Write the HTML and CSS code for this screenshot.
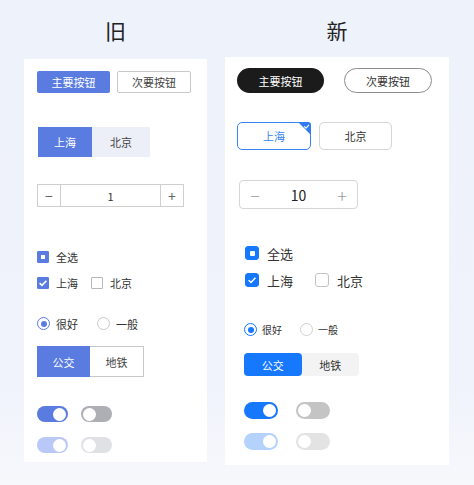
FILE: index.html
```html
<!DOCTYPE html>
<html lang="zh-CN">
<head>
    <meta charset="UTF-8">
    <meta name="viewport" content="width=device-width, initial-scale=1.0">
    <title>组件对比</title>
    <link rel="stylesheet" href="styles.css">
</head>
<body>
    <div class="page">
        <!-- 旧版组件 -->
        <div class="column old">
            <h2 class="title">旧</h2>
            <div class="card">
                <div class="btn-row">
                    <span class="btn primary">主要按钮</span>
                    <span class="btn secondary">次要按钮</span>
                </div>

                <div class="tabs">
                    <span class="tab active">上海</span>
                    <span class="tab">北京</span>
                </div>

                <div class="stepper">
                    <span class="step">&minus;</span>
                    <span class="value">1</span>
                    <span class="step">+</span>
                </div>

                <div class="check-row first">
                    <label class="check"><span class="box half"></span>全选</label>
                </div>
                <div class="check-row">
                    <label class="check"><span class="box on">
                        <svg viewBox="0 0 12 12" width="12" height="12"><path d="M2.6 6.2 L5 8.4 L9.4 3.8" fill="none" stroke="#fff" stroke-width="1.6"/></svg>
                    </span>上海</label>
                    <label class="check"><span class="box"></span>北京</label>
                </div>

                <div class="radio-row">
                    <label class="radio"><span class="dot on"></span>很好</label>
                    <label class="radio"><span class="dot"></span>一般</label>
                </div>

                <div class="segment">
                    <span class="seg active">公交</span>
                    <span class="seg">地铁</span>
                </div>

                <div class="switch-row first">
                    <span class="switch on"></span>
                    <span class="switch"></span>
                </div>
                <div class="switch-row">
                    <span class="switch on disabled"></span>
                    <span class="switch disabled"></span>
                </div>
            </div>
        </div>

        <!-- 新版组件 -->
        <div class="column new">
            <h2 class="title">新</h2>
            <div class="card">
                <div class="btn-row">
                    <span class="btn primary">主要按钮</span>
                    <span class="btn secondary">次要按钮</span>
                </div>

                <div class="tabs">
                    <span class="tab active">上海
                        <svg class="corner" viewBox="0 0 14 14" width="14" height="14">
                            <path d="M1 0 H11 A3 3 0 0 1 14 3 V13 Z" fill="#2f7bf5"/>
                            <path d="M7.2 4.4 L9 6.1 L12 2.8" fill="none" stroke="#fff" stroke-width="1.1"/>
                        </svg>
                    </span>
                    <span class="tab">北京</span>
                </div>

                <div class="stepper">
                    <span class="step">&minus;</span>
                    <span class="value">10</span>
                    <span class="step">+</span>
                </div>

                <div class="check-row first">
                    <label class="check"><span class="box half"></span>全选</label>
                </div>
                <div class="check-row">
                    <label class="check"><span class="box on">
                        <svg viewBox="0 0 14 14" width="14" height="14"><path d="M3.6 7.2 L6 9.4 L10.4 4.8" fill="none" stroke="#fff" stroke-width="1.5"/></svg>
                    </span>上海</label>
                    <label class="check"><span class="box"></span>北京</label>
                </div>

                <div class="radio-row">
                    <label class="radio"><span class="dot on"></span>很好</label>
                    <label class="radio"><span class="dot"></span>一般</label>
                </div>

                <div class="segment">
                    <span class="seg active">公交</span>
                    <span class="seg">地铁</span>
                </div>

                <div class="switch-row first">
                    <span class="switch on"></span>
                    <span class="switch"></span>
                </div>
                <div class="switch-row">
                    <span class="switch on disabled"></span>
                    <span class="switch disabled"></span>
                </div>
            </div>
        </div>
    </div>
</body>
</html>
```

FILE: styles.css
```css
body {
    margin: 0;
    font-family: "Noto Sans CJK SC", "Noto Sans", sans-serif;
    color: #333;
    background: linear-gradient(180deg, #eef2fb 0%, #f0f3fb 80%, #f6f8fc 100%);
    min-height: 485px;
}

.page {
    display: flex;
    padding: 16px 0 0 24px;
    gap: 18px;
}

.column {
    display: flex;
    flex-direction: column;
}

.title {
    margin: 0;
    font-size: 21px;
    font-weight: 400;
    line-height: 28px;
    text-align: center;
    color: #222;
}

.card {
    background: #fff;
    box-sizing: border-box;
}

.btn,
.tab,
.seg,
.step,
.value {
    display: flex;
    align-items: center;
    justify-content: center;
    box-sizing: border-box;
}

.btn-row,
.tabs,
.check-row,
.radio-row,
.switch-row {
    display: flex;
    align-items: center;
}

.check,
.radio {
    display: flex;
    align-items: center;
}

.box,
.dot,
.switch {
    position: relative;
    box-sizing: border-box;
    display: inline-block;
    flex-shrink: 0;
}

.segment {
    display: flex;
    box-sizing: border-box;
}

.stepper {
    display: flex;
    box-sizing: border-box;
}

/* ---------- 旧 ---------- */

.old .card {
    width: 183px;
    height: 403px;
    margin-top: 15px;
    padding: 12px 0 0 13px;
}

.old .btn {
    width: 73px;
    height: 22px;
    font-size: 11px;
    border-radius: 2px;
}

.old .btn.primary {
    background: #5a7be0;
    color: #fff;
}

.old .btn.secondary {
    margin-left: 7px;
    width: 74px;
    border: 1px solid #c8c8c8;
    color: #444;
}

.old .tabs {
    margin: 34px 0 0 1px;
}

.old .tab {
    width: 54px;
    height: 30px;
    font-size: 11px;
    background: #eceef8;
    color: #444;
}

.old .tab + .tab {
    width: 58px;
}

.old .tab.active {
    background: #5a7be0;
    color: #fff;
}

.old .stepper {
    margin-top: 27px;
    width: 147px;
    height: 23px;
    border: 1px solid #cfcfcf;
}

.old .step {
    width: 22px;
    font-size: 14px;
    color: #666;
}

.old .value {
    flex: 1;
    font-size: 11px;
    border-left: 1px solid #cfcfcf;
    border-right: 1px solid #cfcfcf;
}

.old .check-row {
    height: 12px;
    margin-top: 14px;
    font-size: 11px;
}

.old .check-row.first {
    margin-top: 44px;
}

.old .check {
    margin-right: 13px;
}

.old .box {
    width: 12px;
    height: 12px;
    margin-right: 7px;
    border: 1px solid #b8b8b8;
    border-radius: 1px;
}

.old .box.on,
.old .box.half {
    background: #5a7be0;
    border-color: #5a7be0;
}

.old .box svg {
    position: absolute;
    left: -1px;
    top: -1px;
}

.old .box.half::after {
    content: "";
    position: absolute;
    left: 3px;
    top: 3px;
    width: 4px;
    height: 4px;
    background: #fff;
}

.old .radio-row {
    margin-top: 28px;
    height: 13px;
    font-size: 11px;
}

.old .radio {
    margin-right: 19px;
}

.old .dot {
    width: 13px;
    height: 13px;
    margin-right: 6px;
    border: 1px solid #c8c8c8;
    border-radius: 50%;
}

.old .dot.on {
    border-color: #5a7be0;
}

.old .dot.on::after {
    content: "";
    position: absolute;
    left: 2.5px;
    top: 2.5px;
    width: 6px;
    height: 6px;
    border-radius: 50%;
    background: #5a7be0;
}

.old .segment {
    margin-top: 16px;
    width: 107px;
    height: 31px;
    border: 1px solid #c8c8c8;
}

.old .seg {
    flex: 1;
    font-size: 11px;
    color: #444;
}

.old .seg.active {
    margin: -1px 0 -1px -1px;
    background: #5a7be0;
    color: #fff;
}

.old .switch-row {
    margin-top: 15px;
}

.old .switch-row.first {
    margin-top: 29px;
}

.old .switch {
    width: 31px;
    height: 16px;
    border-radius: 8px;
    background: #adafb5;
    margin-right: 13px;
}

.old .switch::after {
    content: "";
    position: absolute;
    left: 2px;
    top: 1.5px;
    width: 13px;
    height: 13px;
    border-radius: 50%;
    background: #fff;
}

.old .switch.on {
    background: #5a7be0;
}

.old .switch.on::after {
    left: 16px;
}

.old .switch.disabled {
    background: #e0e1e5;
}

.old .switch.on.disabled {
    background: #b9c8f6;
}

/* ---------- 新 ---------- */

.new .card {
    width: 224px;
    height: 408px;
    margin-top: 13px;
    padding: 11px 0 0 12px;
}

.new .btn {
    width: 87px;
    height: 25px;
    font-size: 11px;
    border-radius: 13px;
}

.new .btn.primary {
    background: #1b1b1b;
    color: #fff;
}

.new .btn.secondary {
    margin-left: 20px;
    width: 88px;
    border: 1px solid #8c8c8c;
    color: #333;
}

.new .tabs {
    margin-top: 29px;
}

.new .tab {
    position: relative;
    width: 73px;
    height: 28px;
    font-size: 11px;
    border: 1px solid #d4d4d4;
    border-radius: 5px;
    color: #333;
}

.new .tab + .tab {
    margin-left: 8px;
}

.new .tab.active {
    width: 74px;
    border-color: #3a83f6;
    color: #3a7ff0;
}

.new .corner {
    position: absolute;
    right: -1px;
    top: -1px;
}

.new .stepper {
    margin: 30px 0 0 2px;
    width: 119px;
    height: 29px;
    border: 1px solid #d6d6d6;
    border-radius: 4px;
}

.new .step {
    width: 30px;
    font-size: 18px;
    font-weight: 300;
    color: #9a9a9a;
}

.new .value {
    flex: 1;
    font-size: 14px;
    color: #222;
}

.new .check-row {
    height: 14px;
    margin: 13px 0 0 8px;
    font-size: 13px;
}

.new .check-row.first {
    margin-top: 37px;
}

.new .check {
    margin-right: 22px;
}

.new .box {
    width: 14px;
    height: 14px;
    margin-right: 8px;
    border: 1px solid #c4c4c4;
    border-radius: 3px;
}

.new .box.on,
.new .box.half {
    background: #1677ff;
    border-color: #1677ff;
}

.new .box svg {
    position: absolute;
    left: -1px;
    top: -1px;
}

.new .box.half::after {
    content: "";
    position: absolute;
    left: 3.5px;
    top: 3.5px;
    width: 5px;
    height: 5px;
    border-radius: 1px;
    background: #fff;
}

.new .radio-row {
    margin: 36px 0 0 7px;
    height: 13px;
    font-size: 10px;
}

.new .radio {
    margin-right: 18px;
}

.new .dot {
    width: 13px;
    height: 13px;
    margin-right: 5px;
    border: 1px solid #d0d0d0;
    border-radius: 50%;
}

.new .dot.on {
    border-color: #1677ff;
}

.new .dot.on::after {
    content: "";
    position: absolute;
    left: 2.5px;
    top: 2.5px;
    width: 6px;
    height: 6px;
    border-radius: 50%;
    background: #1677ff;
}

.new .segment {
    margin: 17px 0 0 7px;
    width: 115px;
    height: 23px;
    background: #f3f3f3;
    border-radius: 4px;
}

.new .seg {
    flex: 1;
    font-size: 11px;
    color: #333;
    border-radius: 4px;
}

.new .seg.active {
    background: #1677ff;
    color: #fff;
}

.new .switch-row {
    margin: 14px 0 0 7px;
}

.new .switch-row.first {
    margin-top: 26px;
}

.new .switch {
    width: 34px;
    height: 17px;
    border-radius: 9px;
    background: #c4c4c4;
    margin-right: 18px;
}

.new .switch::after {
    content: "";
    position: absolute;
    left: 2px;
    top: 2px;
    width: 13px;
    height: 13px;
    border-radius: 50%;
    background: #fff;
}

.new .switch.on {
    background: #1677ff;
}

.new .switch.on::after {
    left: 19px;
}

.new .switch.disabled {
    background: #e3e3e3;
}

.new .switch.on.disabled {
    background: #b5d2fd;
}
```
